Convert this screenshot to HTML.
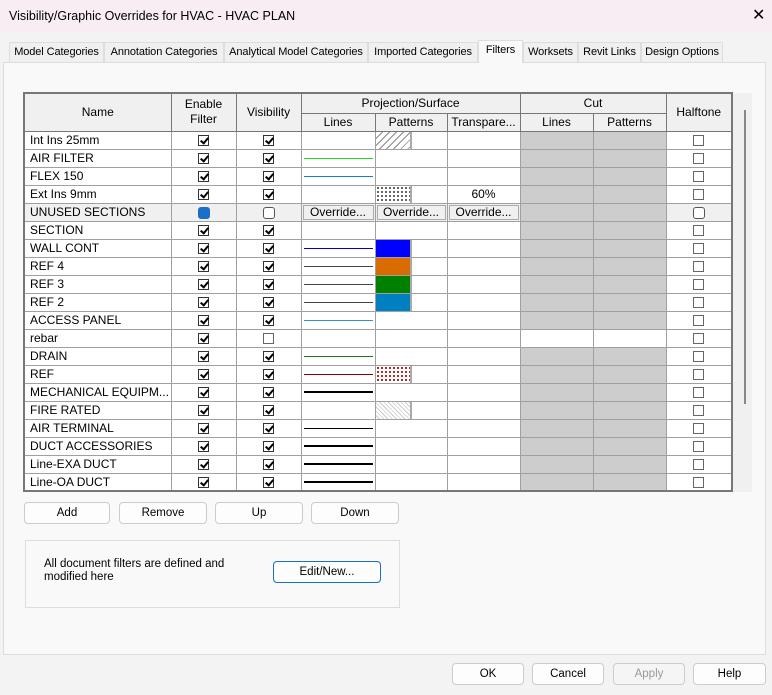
<!DOCTYPE html>
<html><head><meta charset="utf-8"><style>
*{box-sizing:border-box;margin:0;padding:0}
body{width:772px;height:695px;overflow:hidden;background:#f3f3f3;font-family:"Liberation Sans",sans-serif;font-size:12px;color:#000;position:relative}
.a{position:absolute}
.title{left:0;top:0;width:772px;height:32px;background:#f7edf2}
.tab{position:absolute;top:42px;height:20px;border:1px solid #ddd;border-bottom:none;background:#f0f0f0;text-align:center;line-height:19px;font-size:11px;white-space:nowrap;overflow:hidden;letter-spacing:-0.1px}
.panel{left:3px;top:62px;width:763px;height:593px;background:#f9f9f9;border:1px solid #ddd}
table{position:absolute;left:23px;top:92px;border-collapse:collapse;table-layout:fixed;border:2px solid #777;background:#fff}
td,th{border:1px solid #a0a0a0;height:18px;padding:0;font-weight:normal;overflow:hidden;white-space:nowrap;font-size:12px}
th{background:#f0f0f0;text-align:center;border-color:#777}
td.n{padding-left:5px}
td.c{text-align:center}
.cb{display:inline-block;width:11px;height:11px;border:1px solid #333;position:relative;vertical-align:middle;background:#fff}
.cb.k::after{content:"";position:absolute;left:3px;top:0px;width:3px;height:6px;border:solid #000;border-width:0 2px 2px 0;transform:rotate(40deg)}
.cb.h{border-color:#666}
.ln{display:block;margin:0 2px;height:0}
.sw{display:block;width:36px;height:17px;border-right:2px solid #aaa}
.ov{display:block;margin:1px 1px;height:15px;border:1px solid #aaa;background:#f0f0f0;font-size:12px;line-height:13px;text-align:center}
tr.g td{background:#f0f0f0}
table tr td.cut{background:#cdcdcd}
.btn{position:absolute;height:22px;border:1px solid #ccc;border-radius:4px;background:#fdfdfd;text-align:center;line-height:20px;font-size:11.5px}
</style></head><body>
<div class="a title"></div>
<div class="a" style="left:9px;top:9px;font-size:12.5px">Visibility/Graphic Overrides for HVAC - HVAC PLAN</div>
<div class="a" style="left:752px;top:5px;font-size:16px">✕</div>
<div class="a panel"></div>
<div class="tab" style="left:9px;width:95px">Model Categories</div>
<div class="tab" style="left:104px;width:120px">Annotation Categories</div>
<div class="tab" style="left:224px;width:144px">Analytical Model Categories</div>
<div class="tab" style="left:368px;width:110px">Imported Categories</div>
<div class="tab" style="left:478px;top:40px;height:23px;width:45px;background:#f9f9f9;z-index:2">Filters</div>
<div class="tab" style="left:523px;width:55px">Worksets</div>
<div class="tab" style="left:578px;width:63px">Revit Links</div>
<div class="tab" style="left:641px;width:82px">Design Options</div>
<div class="a" style="left:732px;top:93px;width:20px;height:399px;background:#f0f0f0"></div>
<div class="a" style="left:744px;top:110px;width:2px;height:294px;background:#888"></div>
<table>
<colgroup><col style="width:147px"><col style="width:65px"><col style="width:65px"><col style="width:74px"><col style="width:72px"><col style="width:73px"><col style="width:73px"><col style="width:73px"><col style="width:66px"></colgroup>
<tr><th rowspan="2" style="height:38px">Name</th><th rowspan="2" style="line-height:15px">Enable<br>Filter</th><th rowspan="2">Visibility</th><th colspan="3" style="height:20px">Projection/Surface</th><th colspan="2">Cut</th><th rowspan="2">Halftone</th></tr>
<tr><th>Lines</th><th>Patterns</th><th>Transpare...</th><th>Lines</th><th>Patterns</th></tr>
<tr><td class="n">Int Ins 25mm</td><td class="c"><span class="cb k"></span></td><td class="c"><span class="cb k"></span></td><td></td><td><span class="sw" style="background:repeating-linear-gradient(135deg,#fff 0 4px,#888 4px 5px)"></span></td><td></td><td class="cut"></td><td class="cut"></td><td class="c"><span class="cb h"></span></td></tr>
<tr><td class="n">AIR FILTER</td><td class="c"><span class="cb k"></span></td><td class="c"><span class="cb k"></span></td><td><span class="ln" style="border-top:1px solid #22dd22"></span></td><td></td><td></td><td class="cut"></td><td class="cut"></td><td class="c"><span class="cb h"></span></td></tr>
<tr><td class="n">FLEX 150</td><td class="c"><span class="cb k"></span></td><td class="c"><span class="cb k"></span></td><td><span class="ln" style="border-top:1px solid #1e78d8"></span></td><td></td><td></td><td class="cut"></td><td class="cut"></td><td class="c"><span class="cb h"></span></td></tr>
<tr><td class="n">Ext Ins 9mm</td><td class="c"><span class="cb k"></span></td><td class="c"><span class="cb k"></span></td><td></td><td><span class="sw" style="background:radial-gradient(#000 0.7px,#fff 1px) 0 0/4px 4px"></span></td><td class="c">60%</td><td class="cut"></td><td class="cut"></td><td class="c"><span class="cb h"></span></td></tr>
<tr class="g"><td class="n">UNUSED SECTIONS</td><td class="c"><span class="cb" style="background:#1a6fc9;border-color:#1a6fc9;border-radius:3px;width:12px;height:12px"></span></td><td class="c"><span class="cb" style="border-radius:3px;border-color:#555;width:12px;height:12px"></span></td><td><span class="ov">Override...</span></td><td><span class="ov">Override...</span></td><td><span class="ov">Override...</span></td><td class="cut"></td><td class="cut"></td><td class="c"><span class="cb" style="border-radius:3px;border-color:#555;width:12px;height:12px"></span></td></tr>
<tr><td class="n">SECTION</td><td class="c"><span class="cb k"></span></td><td class="c"><span class="cb k"></span></td><td></td><td></td><td></td><td class="cut"></td><td class="cut"></td><td class="c"><span class="cb h"></span></td></tr>
<tr><td class="n">WALL CONT</td><td class="c"><span class="cb k"></span></td><td class="c"><span class="cb k"></span></td><td><span class="ln" style="border-top:1px solid #0000cc"></span></td><td><span class="sw" style="background:#0000ff"></span></td><td></td><td class="cut"></td><td class="cut"></td><td class="c"><span class="cb h"></span></td></tr>
<tr><td class="n">REF 4</td><td class="c"><span class="cb k"></span></td><td class="c"><span class="cb k"></span></td><td><span class="ln" style="border-top:1px solid #444"></span></td><td><span class="sw" style="background:#d86c00"></span></td><td></td><td class="cut"></td><td class="cut"></td><td class="c"><span class="cb h"></span></td></tr>
<tr><td class="n">REF 3</td><td class="c"><span class="cb k"></span></td><td class="c"><span class="cb k"></span></td><td><span class="ln" style="border-top:1px solid #444"></span></td><td><span class="sw" style="background:#008000"></span></td><td></td><td class="cut"></td><td class="cut"></td><td class="c"><span class="cb h"></span></td></tr>
<tr><td class="n">REF 2</td><td class="c"><span class="cb k"></span></td><td class="c"><span class="cb k"></span></td><td><span class="ln" style="border-top:1px solid #444"></span></td><td><span class="sw" style="background:#0080c0"></span></td><td></td><td class="cut"></td><td class="cut"></td><td class="c"><span class="cb h"></span></td></tr>
<tr><td class="n">ACCESS PANEL</td><td class="c"><span class="cb k"></span></td><td class="c"><span class="cb k"></span></td><td><span class="ln" style="border-top:1px solid #3090e0"></span></td><td></td><td></td><td class="cut"></td><td class="cut"></td><td class="c"><span class="cb h"></span></td></tr>
<tr><td class="n">rebar</td><td class="c"><span class="cb k"></span></td><td class="c"><span class="cb h"></span></td><td></td><td></td><td></td><td></td><td></td><td class="c"><span class="cb h"></span></td></tr>
<tr><td class="n">DRAIN</td><td class="c"><span class="cb k"></span></td><td class="c"><span class="cb k"></span></td><td><span class="ln" style="border-top:1px solid #1a7a1a"></span></td><td></td><td></td><td class="cut"></td><td class="cut"></td><td class="c"><span class="cb h"></span></td></tr>
<tr><td class="n">REF</td><td class="c"><span class="cb k"></span></td><td class="c"><span class="cb k"></span></td><td><span class="ln" style="border-top:1px solid #8b0000"></span></td><td><span class="sw" style="background:radial-gradient(#a00 0.8px,#fff 1.2px) 0 0/4px 4px"></span></td><td></td><td class="cut"></td><td class="cut"></td><td class="c"><span class="cb h"></span></td></tr>
<tr><td class="n">MECHANICAL EQUIPM...</td><td class="c"><span class="cb k"></span></td><td class="c"><span class="cb k"></span></td><td><span class="ln" style="border-top:2px solid #000"></span></td><td></td><td></td><td class="cut"></td><td class="cut"></td><td class="c"><span class="cb h"></span></td></tr>
<tr><td class="n">FIRE RATED</td><td class="c"><span class="cb k"></span></td><td class="c"><span class="cb k"></span></td><td></td><td><span class="sw" style="background:repeating-linear-gradient(45deg,#fff 0 2px,#ccc 2px 3px),#eee"></span></td><td></td><td class="cut"></td><td class="cut"></td><td class="c"><span class="cb h"></span></td></tr>
<tr><td class="n">AIR TERMINAL</td><td class="c"><span class="cb k"></span></td><td class="c"><span class="cb k"></span></td><td><span class="ln" style="border-top:1px solid #000"></span></td><td></td><td></td><td class="cut"></td><td class="cut"></td><td class="c"><span class="cb h"></span></td></tr>
<tr><td class="n">DUCT ACCESSORIES</td><td class="c"><span class="cb k"></span></td><td class="c"><span class="cb k"></span></td><td><span class="ln" style="border-top:2px solid #000"></span></td><td></td><td></td><td class="cut"></td><td class="cut"></td><td class="c"><span class="cb h"></span></td></tr>
<tr><td class="n">Line-EXA DUCT</td><td class="c"><span class="cb k"></span></td><td class="c"><span class="cb k"></span></td><td><span class="ln" style="border-top:2px solid #000"></span></td><td></td><td></td><td class="cut"></td><td class="cut"></td><td class="c"><span class="cb h"></span></td></tr>
<tr><td class="n">Line-OA DUCT</td><td class="c"><span class="cb k"></span></td><td class="c"><span class="cb k"></span></td><td><span class="ln" style="border-top:2px solid #000"></span></td><td></td><td></td><td class="cut"></td><td class="cut"></td><td class="c"><span class="cb h"></span></td></tr>
</table>
<div class="btn" style="left:24px;top:502px;width:86px">Add</div>
<div class="btn" style="left:119px;top:502px;width:88px">Remove</div>
<div class="btn" style="left:215px;top:502px;width:88px">Up</div>
<div class="btn" style="left:311px;top:502px;width:88px">Down</div>
<div class="a" style="left:25px;top:540px;width:375px;height:68px;border:1px solid #ddd"></div>
<div class="a" style="left:44px;top:558px;font-size:11.5px;line-height:13px">All document filters are defined and<br>modified here</div>
<div class="btn" style="left:273px;top:561px;width:108px;border-color:#1a6fc9">Edit/New...</div>
<div class="btn" style="left:452px;top:663px;width:72px">OK</div>
<div class="btn" style="left:532px;top:663px;width:72px">Cancel</div>
<div class="btn" style="left:613px;top:663px;width:72px;color:#999;background:#f5f5f5">Apply</div>
<div class="btn" style="left:693px;top:663px;width:73px">Help</div>
</body></html>
